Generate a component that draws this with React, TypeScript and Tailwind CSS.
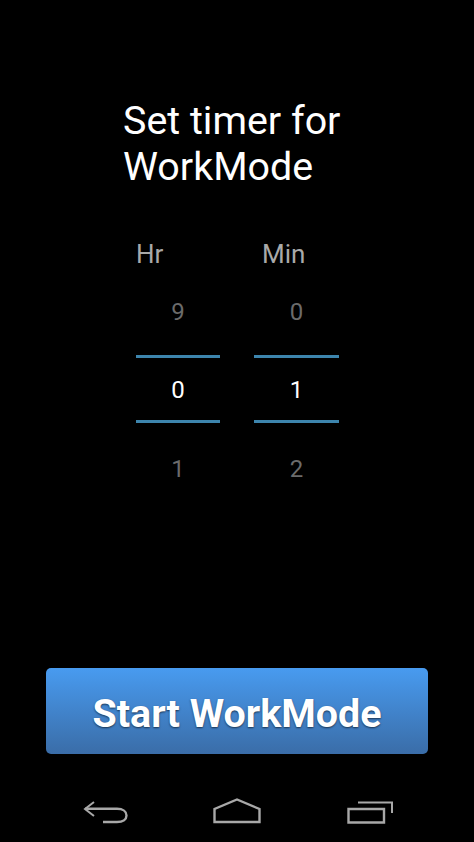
const COLUMNS = [
  { label: "Hr", labelClass: "pl-0", width: "w-[84px]", values: ["9", "0", "1"] },
  { label: "Min", labelClass: "pl-[8px]", width: "w-[85px]", values: ["0", "1", "2"] },
];

function NumberPicker({ width, values }: { width: string; values: string[] }) {
  return (
    <div className={`${width} flex flex-col items-center`}>
      <div className="h-[78px] flex items-center justify-center text-[24px] text-[#6b6b6b] pb-[8px]">{values[0]}</div>
      <div className="w-full h-[68px] pt-[1px] border-y-[3px] border-[#3d85ad] flex items-center justify-center text-[24px] text-white">
        {values[1]}
      </div>
      <div className="h-[78px] flex items-center justify-center text-[24px] text-[#6b6b6b] pt-[14px]">{values[2]}</div>
    </div>
  );
}

function BackIcon() {
  return (
    <svg width="46" height="26" viewBox="0 0 46 26" fill="none" stroke="#a8a8a8" strokeWidth="2">
      <path d="M12 4 L3 11 L12 18" />
      <path d="M3 10.8 H35 C41 10.8 44.5 13.5 44.5 17.4 C44.5 21.3 41 24 35 24 H21" strokeWidth="2.4" />
    </svg>
  );
}

function HomeIcon() {
  return (
    <svg width="48" height="26" viewBox="0 0 48 26" fill="none" stroke="#a8a8a8" strokeWidth="2.4">
      <path d="M1.5 24 V11 L24 1.5 L46.5 11 V24 Z" />
    </svg>
  );
}

function RecentsIcon() {
  return (
    <svg width="46" height="24" viewBox="0 0 46 24" fill="none" stroke="#a8a8a8" strokeWidth="2.4">
      <path d="M1.5 9 H37 V22.5 H1.5 Z" />
      <path d="M11 2.5 H45 V13" strokeWidth="2" />
    </svg>
  );
}

export default function App() {
  return (
    <div className="w-[474px] h-[842px] bg-black flex flex-col font-['Roboto',sans-serif] overflow-hidden">
      <div className="pt-[98px] pl-[123px] text-[39.4px] leading-[46px] text-white">
        <div>Set timer for</div>
        <div>WorkMode</div>
      </div>

      <div className="mt-[47px] pl-[136px] flex gap-[34px]">
        {COLUMNS.map((col) => (
          <div key={col.label} className="flex flex-col">
            <div className={`${col.labelClass} h-[40px] leading-[34px] text-[26px] text-[#a9a9a9]`}>{col.label}</div>
            <NumberPicker width={col.width} values={col.values} />
          </div>
        ))}
      </div>

      <div className="mt-auto px-[46px]">
        <button
          type="button"
          className="w-[382px] h-[86px] pt-[5px] rounded-[5px] bg-gradient-to-b from-[#489bf0] to-[#3a6da8] text-white text-[39.4px] font-bold [text-shadow:0_1px_2px_rgba(0,0,0,0.6)]"
        >
          Start WorkMode
        </button>
      </div>

      <div className="h-[88px] pl-[82px] pt-[44px] flex items-start">
        <BackIcon />
        <div className="ml-[85px]"><HomeIcon /></div>
        <div className="ml-[86px] mt-[2px]"><RecentsIcon /></div>
      </div>
    </div>
  );
}
